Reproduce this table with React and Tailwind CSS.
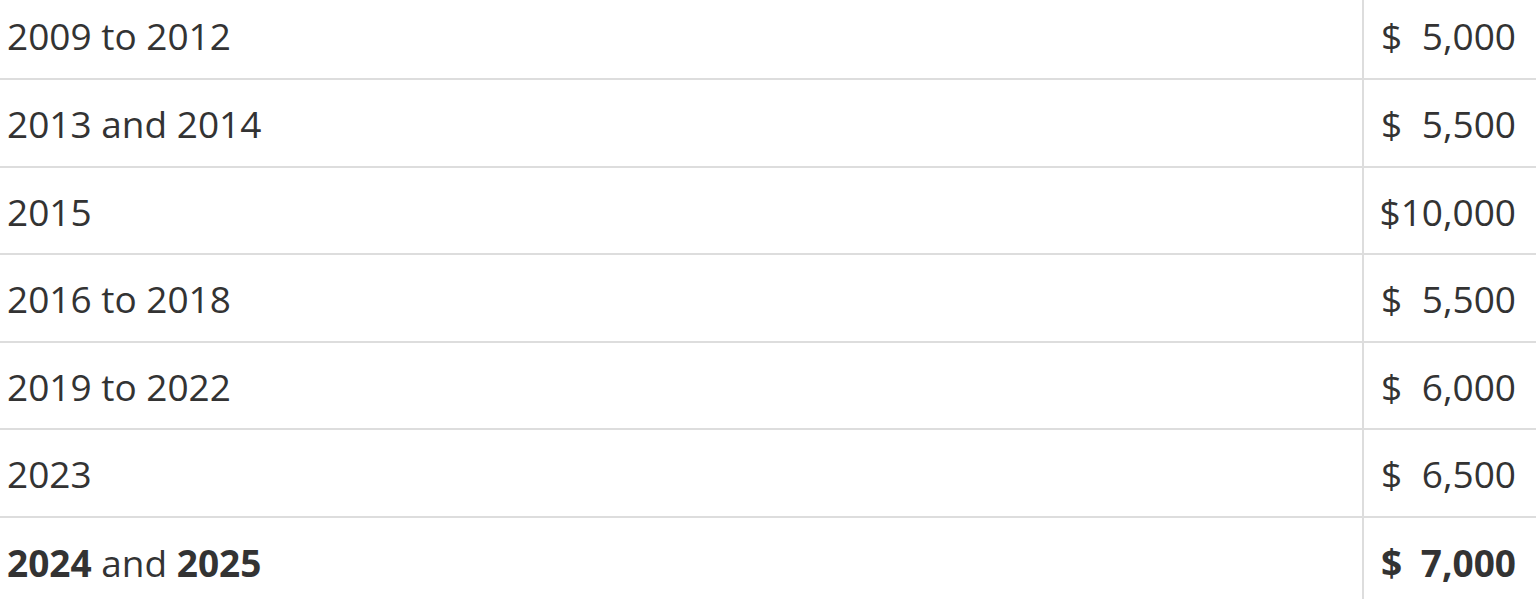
import React from "react";

const rows = [
  { years: "2009 to 2012", amount: "5,000" },
  { years: "2013 and 2014", amount: "5,500" },
  { years: "2015", amount: "10,000", tight: true },
  { years: "2016 to 2018", amount: "5,500" },
  { years: "2019 to 2022", amount: "6,000" },
  { years: "2023", amount: "6,500" },
  { years: null, amount: "7,000", bold: true },
];

export default function App() {
  return (
    <div
      className="w-[1536px] h-[599px] overflow-hidden bg-white text-[#333333] text-[37px]"
      style={{ fontFamily: '"Open Sans", "Liberation Sans", sans-serif' }}
    >
      <div className="-mt-[7.6px]">
        {rows.map((r, i) => (
          <div
            key={i}
            className={`flex h-[87.6px] ${i < rows.length - 1 ? "border-b-2 border-[#dddddd]" : ""}`}
          >
            <div className="flex-1 flex items-center pl-[7px] pt-[2px]">
              {r.years ? (
                r.years
              ) : (
                <span>
                  <b className="font-bold">2024</b> and <b className="font-bold">2025</b>
                </span>
              )}
            </div>
            <div
              className={`w-[174px] border-l-2 border-[#dddddd] flex items-center pr-[20px] pl-[17px] pt-[2px] ${
                r.tight ? "justify-end" : "justify-between"
              } ${r.bold ? "font-bold" : ""}`}
            >
              {r.tight ? (
                <span>${r.amount}</span>
              ) : (
                <>
                  <span>$</span>
                  <span>{r.amount}</span>
                </>
              )}
            </div>
          </div>
        ))}
      </div>
    </div>
  );
}
